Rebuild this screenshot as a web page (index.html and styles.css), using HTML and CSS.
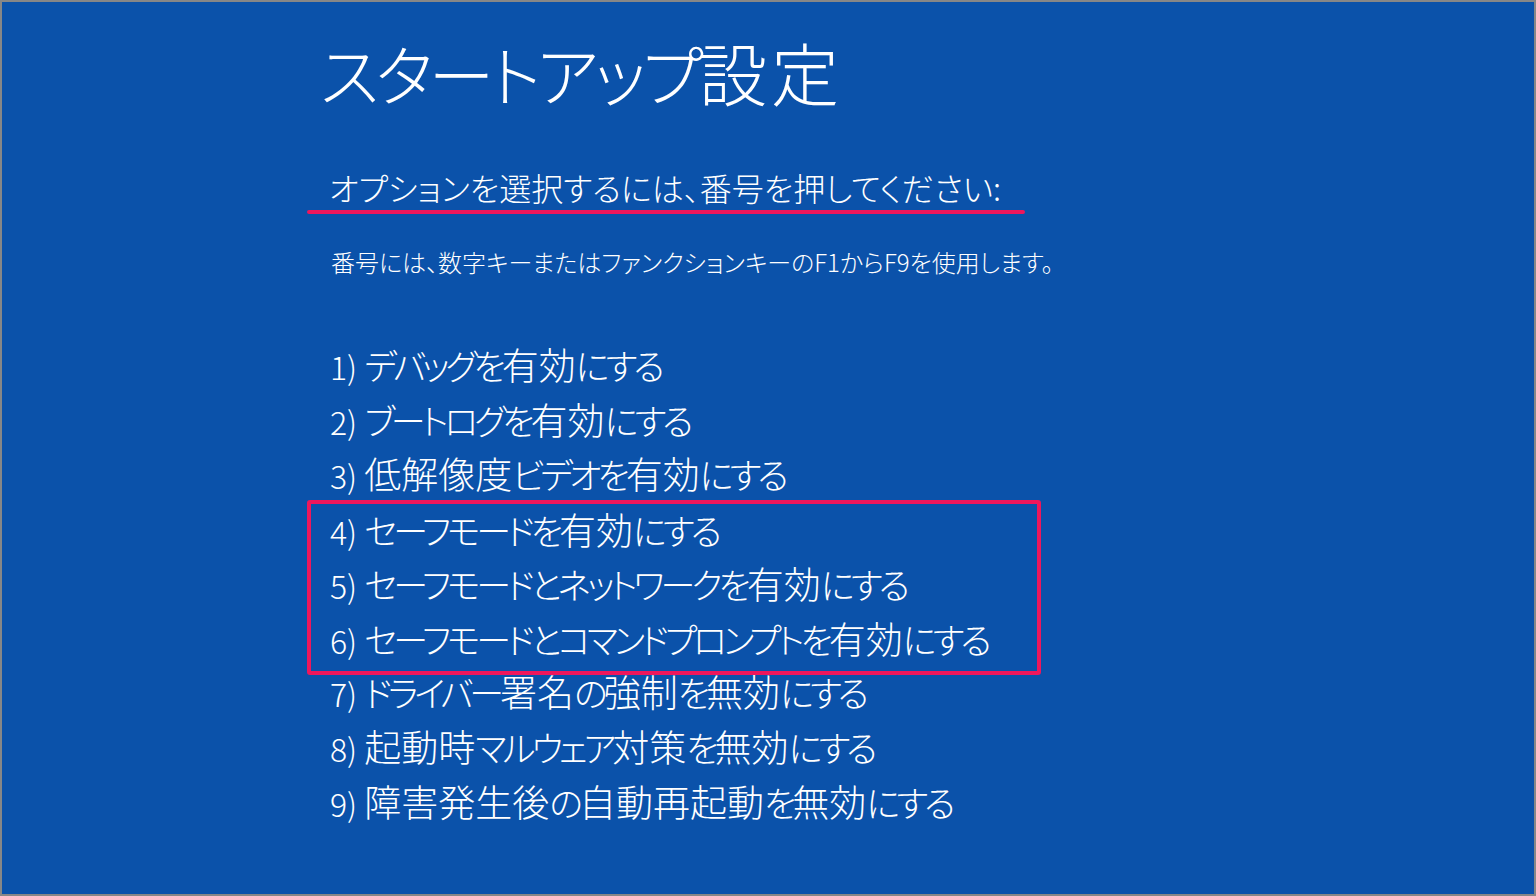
FILE: index.html
```html
<!DOCTYPE html>
<html lang="ja">
<head>
<meta charset="utf-8">
<title>スタートアップ設定</title>
<link rel="stylesheet" href="styles.css">
</head>
<body>
<div class="screen">
  <div class="column">
    <h1 class="title">スタートアップ<span class="k">設定</span></h1>
    <div class="prompt">オプションを選択するには、番号を押してください:</div>
    <div class="underline"></div>
    <div class="note">番号には、数字キーまたはファンクションキーのF1からF9を使用します。</div>
    <ul class="options">
      <li><span class="n">1) </span>デバッグを<span class="k">有効</span>にする</li>
      <li><span class="n">2) </span>ブートログを<span class="k">有効</span>にする</li>
      <li><span class="n">3) </span><span class="k">低解像度</span>ビデオを<span class="k">有効</span>にする</li>
      <li class="boxed">
        <ul class="box">
          <li><span class="n">4) </span>セーフモードを<span class="k">有効</span>にする</li>
          <li><span class="n">5) </span>セーフモードとネットワークを<span class="k">有効</span>にする</li>
          <li><span class="n">6) </span>セーフモードとコマンドプロンプトを<span class="k">有効</span>にする</li>
        </ul>
      </li>
      <li><span class="n">7) </span>ドライバー<span class="k">署名</span>の<span class="k">強制</span>を<span class="k">無効</span>にする</li>
      <li><span class="n">8) </span><span class="k">起動時</span>マルウェア<span class="k">対策</span>を<span class="k">無効</span>にする</li>
      <li><span class="n">9) </span><span class="k">障害発生後</span>の<span class="k">自動再起動</span>を<span class="k">無効</span>にする</li>
    </ul>
  </div>
</div>
</body>
</html>
```
FILE: styles.css
```css
html, body {
  margin: 0;
  padding: 0;
}
body {
  width: 1536px;
  height: 896px;
  overflow: hidden;
  font-family: "Noto Sans CJK JP", "Noto Sans", sans-serif;
  font-feature-settings: "palt";
  color: #ffffff;
}
.screen {
  box-sizing: border-box;
  width: 1536px;
  height: 896px;
  background: #0b52aa;
  border: 2px solid #878787;
  padding-top: 30px;
}
.column {
  margin-left: 305px;
  display: flex;
  flex-direction: column;
  align-items: flex-start;
}
.title {
  margin: 0 0 0 13px;
  font-size: 66px;
  line-height: 80px;
  font-weight: 300;
  letter-spacing: -4px;
  white-space: nowrap;
}
.title .k {
  font-size: 68px;
  letter-spacing: 4px;
}
.prompt {
  margin: 55px 0 0 22px;
  font-size: 32px;
  line-height: 40px;
  font-weight: 300;
  white-space: nowrap;
}
.underline {
  margin: 3px 0 0 0;
  width: 718px;
  height: 4px;
  border-radius: 2px;
  background: #ee175c;
}
.note {
  margin: 33px 0 0 24px;
  font-size: 24px;
  line-height: 30px;
  font-weight: 300;
  white-space: nowrap;
}
.options {
  list-style: none;
  margin: 61px 0 0 0;
  padding: 0;
}
.options li {
  font-size: 35px;
  line-height: 54.6px;
  font-weight: 300;
  letter-spacing: -4px;
  padding-left: 23px;
  white-space: nowrap;
}
.options .k {
  font-size: 37px;
  line-height: 1;
  letter-spacing: 0;
}
.options .n {
  font-size: 32px;
  line-height: 1;
  letter-spacing: 0;
}
.options li.boxed {
  padding-left: 0;
  letter-spacing: 0;
  line-height: normal;
}
.box {
  list-style: none;
  margin: -2px 0 -9.7px 0;
  padding: 0 0 4.5px 0;
  width: 726px;
  border: 4px solid #ee175c;
  border-radius: 3px;
}
.box li {
  padding-left: 19px;
}
.box li:first-child {
  margin-top: -1px;
}
```
